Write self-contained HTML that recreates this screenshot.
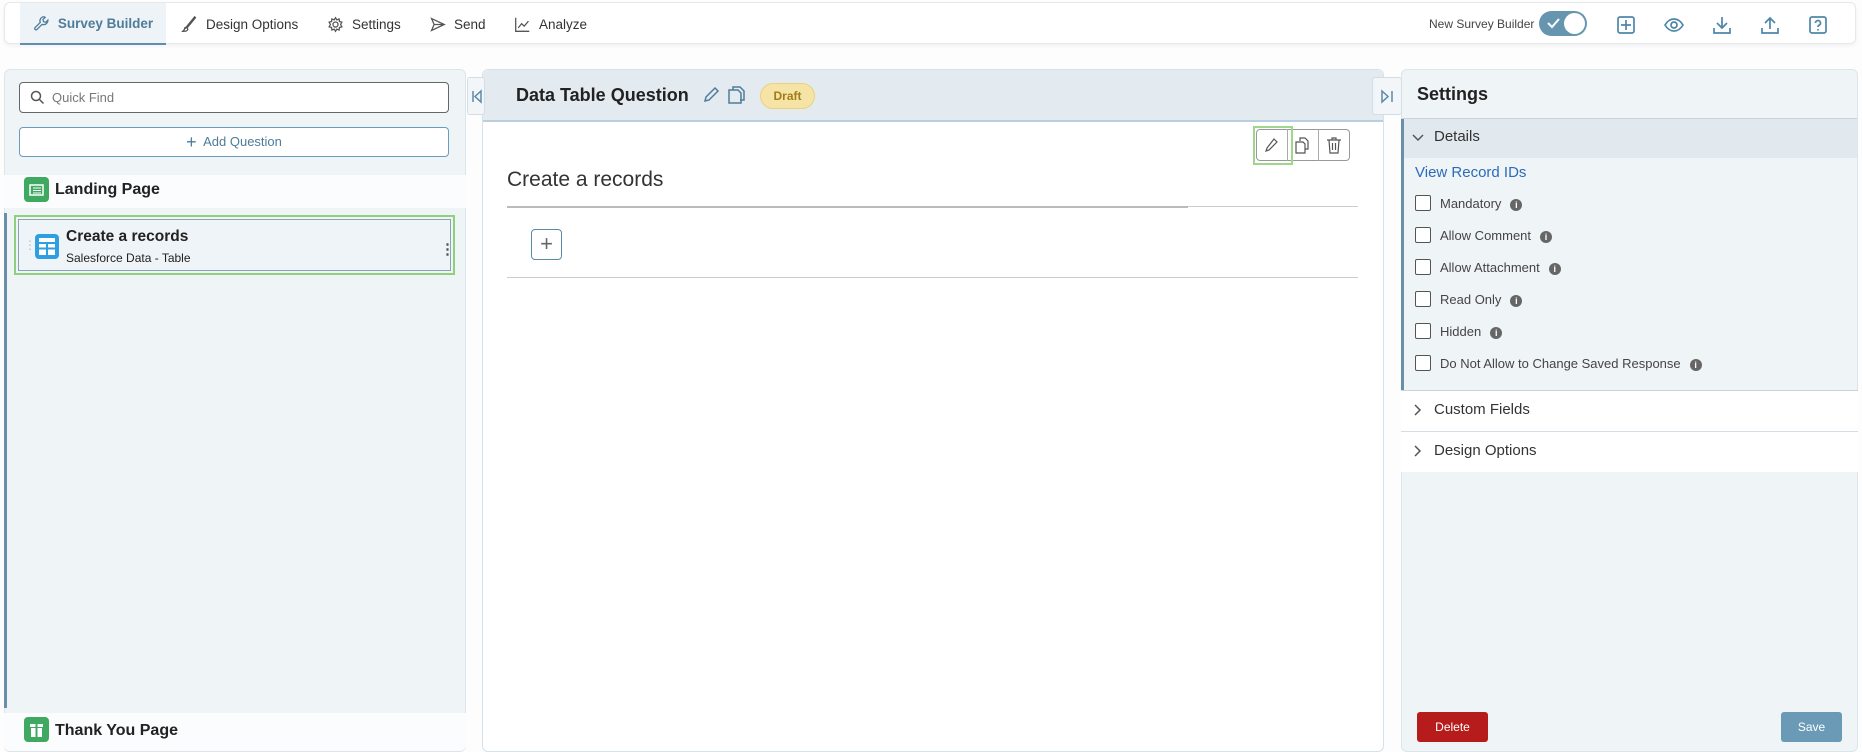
<!DOCTYPE html>
<html><head><meta charset="utf-8"><style>
*{box-sizing:border-box;margin:0;padding:0}
body{width:1862px;height:752px;background:#fdfdfe;font-family:"Liberation Sans",sans-serif;position:relative;overflow:hidden;color:#222}
.abs{position:absolute}
.nav{left:4px;top:2px;width:1852px;height:42px;background:#fff;border:1px solid #e6e9ec;border-radius:6px;box-shadow:0 2px 4px rgba(0,0,0,.05)}
.tab{position:absolute;top:0;height:42px;display:flex;align-items:center;font-size:13.5px;color:#333;gap:8px}
.tab svg{width:17px;height:17px;stroke:#555;fill:none;stroke-width:1.5}
.sb{left:15px;width:146px;background:#eef3f7;border-bottom:2px solid #5f8fac;color:#4e7c99;font-weight:bold;justify-content:center}
.sb svg{stroke:#4e7c99}
.ico{position:absolute;top:12px;width:20px;height:20px;stroke:#4e86a8;fill:none;stroke-width:1.7}
.panel{border:1px solid #dde4ea;border-radius:6px;background:#eff4f7}
.cb{position:absolute;left:1415px;width:16px;height:16px;border:1px solid #555;border-radius:2px;background:#fff}
.cl{position:absolute;left:1440px;font-size:13px;color:#444}
.info{display:inline-block;width:12px;height:12px;border-radius:50%;background:#666;color:#fff;font-size:9px;font-weight:bold;text-align:center;line-height:12px;margin-left:9px;vertical-align:0}
</style></head><body>
<div class="abs nav">
 <div class="tab sb"><svg viewBox="0 0 20 20"><path d="M13 2a5 5 0 0 0-4.5 6.8L2.5 14.8a1.5 1.5 0 0 0 2.2 2.2l6-6A5 5 0 0 0 17.5 6l-2.6 2.6-2.5-.7-.7-2.5L14.3 2.8A5 5 0 0 0 13 2z"/></svg>Survey Builder</div>
 <div class="tab" style="left:176px"><svg viewBox="0 0 20 20"><path d="M17 2l-9 11-2 1 1-2 9-11zM7 13c-2 0-3 1-3 3l-2 2c3 0 5 0 6-2z"/></svg>Design Options</div>
 <div class="tab" style="left:322px"><svg viewBox="0 0 20 20"><circle cx="10" cy="10" r="3"/><path d="M10 2l1.5 2.5 2.8-1 .3 3 2.9.8-1.5 2.7 1.5 2.7-2.9.8-.3 3-2.8-1L10 18l-1.5-2.5-2.8 1-.3-3-2.9-.8L4 10 2.5 7.3l2.9-.8.3-3 2.8 1z"/></svg>Settings</div>
 <div class="tab" style="left:424px"><svg viewBox="0 0 20 20"><path d="M3 3l15 7-15 7 3-7zM6 10h12"/></svg>Send</div>
 <div class="tab" style="left:509px"><svg viewBox="0 0 20 20"><path d="M2 2v16h16M5 14l4-5 3 3 5-6"/></svg>Analyze</div>
 <div class="abs" style="left:1424px;top:14px;font-size:12px;color:#444">New Survey Builder</div>
 <div class="abs" style="left:1534px;top:8px;width:48px;height:25px;border-radius:13px;background:#6695b0"><svg class="abs" style="left:7px;top:6px" width="14" height="13" viewBox="0 0 14 13"><path d="M2 6l4 4 7-8" stroke="#fff" stroke-width="2" fill="none"/></svg><div class="abs" style="left:25px;top:2px;width:21px;height:21px;border-radius:50%;background:#fff"></div></div>
 <svg class="ico" style="left:1611px" viewBox="0 0 20 20"><rect x="2" y="2" width="16" height="16" rx="2"/><path d="M10 5v10M5 10h10"/></svg>
 <svg class="ico" style="left:1659px" viewBox="0 0 20 20"><path d="M1 10c3-5 6-6 9-6s6 1 9 6c-3 5-6 6-9 6s-6-1-9-6z"/><circle cx="10" cy="10" r="3"/></svg>
 <svg class="ico" style="left:1707px" viewBox="0 0 20 20"><path d="M10 2v11M5 8l5 5 5-5M2 13v5h16v-5"/></svg>
 <svg class="ico" style="left:1755px" viewBox="0 0 20 20"><path d="M10 14V3M5 8l5-5 5 5M2 13v5h16v-5"/></svg>
 <svg class="ico" style="left:1803px" viewBox="0 0 20 20"><rect x="2" y="2" width="16" height="16" rx="2"/><path d="M7.5 8a2.5 2.5 0 1 1 3.5 2.3c-.8.4-1 1-1 1.7M10 14v1.5"/></svg>
</div>

<div class="abs panel" style="left:4px;top:69px;width:462px;height:683px"></div>
<div class="abs" style="left:19px;top:82px;width:430px;height:31px;border:1px solid #666;border-radius:4px;background:#fff"><svg class="abs" style="left:10px;top:7px" width="15" height="15" viewBox="0 0 15 15"><circle cx="6" cy="6" r="4.5" stroke="#555" stroke-width="1.5" fill="none"/><path d="M9.5 9.5l4 4" stroke="#555" stroke-width="1.5"/></svg><span class="abs" style="left:32px;top:7px;font-size:13px;color:#777">Quick Find</span></div>
<div class="abs" style="left:19px;top:127px;width:430px;height:30px;border:1px solid #6b9cbb;border-radius:4px;background:#fff;color:#4e7c99;font-size:13px;text-align:center;line-height:28px"><span style="font-size:18px;vertical-align:-2px">+</span>&nbsp; Add Question</div>
<div class="abs" style="left:4px;top:175px;width:462px;height:33px;background:#fbfcfd"></div>
<div class="abs" style="left:24px;top:177px;width:25px;height:25px;border-radius:4px;background:#3fa861"><svg width="25" height="25" viewBox="0 0 25 25"><rect x="6" y="8" width="13" height="10" fill="none" stroke="#fff" stroke-width="1.5"/><path d="M9 11h8M9 13.5h8M9 16h8" stroke="#fff"/></svg></div>
<div class="abs" style="left:55px;top:181px;font-size:16px;font-weight:bold;color:#222">Landing Page</div>
<div class="abs" style="left:4px;top:213px;width:3px;height:495px;background:#6a8fa8"></div>
<div class="abs" style="left:14px;top:215px;width:441px;height:60px;border:2px solid #8fd07c;"></div>
<div class="abs" style="left:18px;top:219px;width:433px;height:52px;border:1px solid #8aa3b5;background:#eef4f8"></div>
<div class="abs" style="left:24px;top:238px;color:#bbb;font-size:12px;letter-spacing:-1px">⋮⋮</div>
<div class="abs" style="left:35px;top:234px;width:24px;height:25px;border-radius:4px;background:#2e9fe0"><svg width="24" height="25" viewBox="0 0 24 25"><rect x="4" y="4" width="16" height="17" fill="#fff"/><path d="M4 9h16M4 14.5h16M12 9v12" stroke="#2e9fe0" stroke-width="2"/></svg></div>
<div class="abs" style="left:66px;top:228px;font-size:15.5px;font-weight:bold;color:#222">Create a records</div>
<div class="abs" style="left:66px;top:251px;font-size:12px;color:#222">Salesforce Data - Table</div>
<div class="abs" style="left:440px;top:240px;font-size:15px;color:#555;font-weight:bold">⋮</div>
<div class="abs" style="left:4px;top:713px;width:462px;height:38px;background:#fbfcfd;border-radius:0 0 6px 6px"></div>
<div class="abs" style="left:24px;top:717px;width:25px;height:25px;border-radius:4px;background:#3fa861"><svg width="25" height="25" viewBox="0 0 25 25"><rect x="7" y="11" width="11" height="9" fill="#fff"/><rect x="6" y="7" width="13" height="3" fill="#fff"/><path d="M12.5 7v13" stroke="#3fa861" stroke-width="2"/></svg></div>
<div class="abs" style="left:55px;top:722px;font-size:16px;font-weight:bold;color:#222">Thank You Page</div>

<div class="abs" style="left:482px;top:69px;width:902px;height:683px;border:1px solid #d6e2ea;border-radius:6px;background:#fff"></div>
<div class="abs" style="left:483px;top:70px;width:900px;height:52px;background:#e3ebf1;border-bottom:2px solid #b9cfdd;border-radius:6px 6px 0 0"></div>
<div class="abs" style="left:467px;top:77px;width:18px;height:38px;background:#f2f6f9;border:1px solid #d2dde5;border-radius:3px"><svg width="18" height="38" viewBox="0 0 18 38"><path d="M5 13v11M13 13l-6 5.5 6 5.5z" stroke="#5b8aa8" stroke-width="1.5" fill="none"/></svg></div>
<div class="abs" style="left:516px;top:85px;font-size:18px;font-weight:bold;color:#222">Data Table Question</div>
<svg class="abs" style="left:702px;top:86px" width="18" height="18" viewBox="0 0 18 18"><path d="M13 2l3 3-9 9-4 1 1-4z" stroke="#4e7c99" stroke-width="1.5" fill="none"/></svg>
<svg class="abs" style="left:726px;top:85px" width="20" height="20" viewBox="0 0 20 20"><path d="M7 5V2h7l4 4v9h-4M6 5h6l3 3v10H3V5z" stroke="#4e7c99" stroke-width="1.5" fill="none"/></svg>
<div class="abs" style="left:760px;top:83px;width:55px;height:26px;border:1px solid #ebd27c;background:#f5e4a6;border-radius:13px;font-size:12px;font-weight:bold;color:#a07d17;text-align:center;line-height:24px">Draft</div>
<div class="abs" style="left:1256px;top:129px;width:94px;height:32px;border:1px solid #999;border-radius:4px;background:#fff"></div>
<div class="abs" style="left:1287px;top:129px;width:1px;height:32px;background:#aaa"></div>
<div class="abs" style="left:1318px;top:129px;width:1px;height:32px;background:#aaa"></div>
<div class="abs" style="left:1253px;top:126px;width:40px;height:39px;border:2px solid #9fd68c"></div>
<svg class="abs" style="left:1263px;top:137px" width="16" height="16" viewBox="0 0 16 16"><path d="M11 2l3 3-8 8-3 1 1-3z" stroke="#555" stroke-width="1.2" fill="none"/></svg>
<svg class="abs" style="left:1294px;top:137px" width="16" height="17" viewBox="0 0 16 17"><path d="M6 4V1h5l3 3v8h-3M4 5h5l2 2v9H2V5z" stroke="#555" stroke-width="1.2" fill="none"/></svg>
<svg class="abs" style="left:1326px;top:136px" width="16" height="18" viewBox="0 0 16 18"><path d="M1 4h14M6 4V2h4v2M3 4l1 13h8l1-13M6.5 7v7M9.5 7v7" stroke="#555" stroke-width="1.2" fill="none"/></svg>
<div class="abs" style="left:507px;top:168px;font-size:21px;color:#333">Create a records</div>
<div class="abs" style="left:507px;top:206px;width:851px;height:1px;background:#ccc"></div>
<div class="abs" style="left:507px;top:206px;width:681px;height:2px;background:#bbb"></div>
<div class="abs" style="left:531px;top:229px;width:31px;height:31px;border:1px solid #5b8aa8;border-radius:4px;background:#fff;text-align:center;line-height:27px;font-size:22px;color:#666">+</div>
<div class="abs" style="left:507px;top:277px;width:851px;height:1px;background:#ccc"></div>

<div class="abs panel" style="left:1401px;top:69px;width:457px;height:683px"></div>
<div class="abs" style="left:1372px;top:77px;width:30px;height:38px;background:#f2f6f9;border:1px solid #d2dde5;border-radius:3px"><svg width="30" height="38" viewBox="0 0 30 38"><path d="M9 13l6 5.5-6 5.5zM19 13v11" stroke="#5b8aa8" stroke-width="1.5" fill="none"/></svg></div>
<div class="abs" style="left:1417px;top:84px;font-size:18px;font-weight:bold;color:#222">Settings</div>
<div class="abs" style="left:1402px;top:118px;width:455px;height:1px;background:#c8d3db"></div>
<div class="abs" style="left:1401px;top:119px;width:3px;height:271px;background:#6a8fa8"></div>
<div class="abs" style="left:1404px;top:119px;width:453px;height:39px;background:#e1e9ef"></div>
<svg class="abs" style="left:1411px;top:132px" width="14" height="12" viewBox="0 0 14 12"><path d="M2 3l5 5 5-5" stroke="#555" stroke-width="1.5" fill="none"/></svg>
<div class="abs" style="left:1434px;top:128px;font-size:15px;color:#333">Details</div>
<div class="abs" style="left:1415px;top:164px;font-size:15px;color:#2c6bb8">View Record IDs</div>
<div class="cb" style="top:195px"></div><div class="cl" style="top:196px">Mandatory<span class="info">i</span></div>
<div class="cb" style="top:227px"></div><div class="cl" style="top:228px">Allow Comment<span class="info">i</span></div>
<div class="cb" style="top:259px"></div><div class="cl" style="top:260px">Allow Attachment<span class="info">i</span></div>
<div class="cb" style="top:291px"></div><div class="cl" style="top:292px">Read Only<span class="info">i</span></div>
<div class="cb" style="top:323px"></div><div class="cl" style="top:324px">Hidden<span class="info">i</span></div>
<div class="cb" style="top:355px"></div><div class="cl" style="top:356px">Do Not Allow to Change Saved Response<span class="info">i</span></div>
<div class="abs" style="left:1401px;top:390px;width:457px;height:82px;background:#fff;border-top:1px solid #c8d3db"></div>
<div class="abs" style="left:1401px;top:431px;width:457px;height:1px;background:#d4dde3"></div>
<svg class="abs" style="left:1411px;top:403px" width="12" height="14" viewBox="0 0 12 14"><path d="M4 2l5 5-5 5" stroke="#555" stroke-width="1.5" fill="none"/></svg>
<div class="abs" style="left:1434px;top:401px;font-size:15px;color:#333">Custom Fields</div>
<svg class="abs" style="left:1411px;top:444px" width="12" height="14" viewBox="0 0 12 14"><path d="M4 2l5 5-5 5" stroke="#555" stroke-width="1.5" fill="none"/></svg>
<div class="abs" style="left:1434px;top:442px;font-size:15px;color:#333">Design Options</div>
<div class="abs" style="left:1417px;top:712px;width:71px;height:30px;background:#b71c1c;border-radius:3px;color:#fff;font-size:12px;text-align:center;line-height:30px">Delete</div>
<div class="abs" style="left:1781px;top:712px;width:61px;height:30px;background:#6a9ab6;border-radius:3px;color:#fff;font-size:12px;text-align:center;line-height:30px">Save</div>
</body></html>
